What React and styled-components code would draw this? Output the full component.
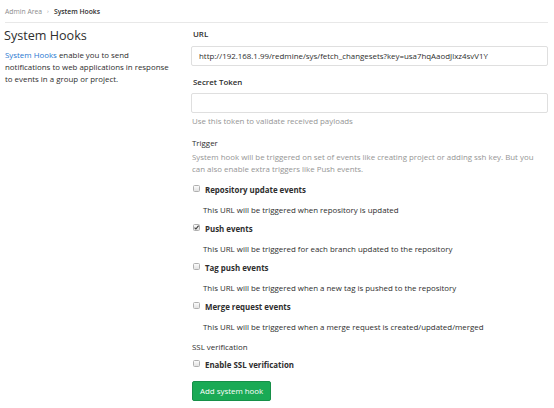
import React from 'react';
import styled, { createGlobalStyle } from 'styled-components';

const GlobalStyle = createGlobalStyle`
  html, body {
    margin: 0;
    padding: 0;
    background: #fff;
  }
  body {
    font-family: "Open Sans", "Noto Sans", sans-serif;
    color: #2e2e2e;
  }
`;

const Page = styled.div`
  width: 554px;
  height: 408px;
  padding: 0 6px 0 5px;
  box-sizing: border-box;
  overflow: hidden;
`;

const Breadcrumbs = styled.div`
  display: flex;
  align-items: center;
  gap: 5px;
  height: 22px;
  border-bottom: 1px solid #e8e8e8;
  font-size: 6.8px;
`;

const Crumb = styled.span`
  color: ${p => (p.current ? '#2e2e2e' : '#8c8c8c')};
  font-weight: ${p => (p.current ? 600 : 400)};
`;

const Sep = styled.span`
  color: #a0a0a0;
  font-size: 6px;
`;

const Content = styled.div`
  display: grid;
  grid-template-columns: 186px 1fr;
`;

const Sidebar = styled.div`
  padding-right: 6px;
`;

const Title = styled.h3`
  margin: 3px 0 3px -1px;
  font-size: 12.6px;
  font-weight: 400;
  line-height: 20px;
`;

const Lead = styled.p`
  margin: 0;
  font-size: 7.9px;
  line-height: 12px;
  white-space: nowrap;
`;

const Link = styled.a`
  color: #1f78d1;
  text-decoration: none;
`;

const Form = styled.div`
  display: flex;
  flex-direction: column;
`;

const Label = styled.label`
  display: block;
  font-size: 7.9px;
  font-weight: ${p => (p.light ? 400 : 600)};
  line-height: 12px;
  margin: ${p => p.margin || '0'};
`;

const Input = styled.div`
  height: 20px;
  box-sizing: border-box;
  border: 1px solid #dfdfdf;
  border-radius: 2px;
  display: flex;
  align-items: center;
  padding: 0 7px;
  font-size: 7.9px;
  color: #2e2e2e;
  white-space: nowrap;
`;

const Help = styled.p`
  margin: ${p => p.margin || '0'};
  font-size: 7.9px;
  line-height: 12px;
  color: #959595;
`;

const CheckRow = styled.div`
  display: flex;
  align-items: center;
  gap: 5px;
  height: 12px;
  margin: ${p => p.margin || '0'};
`;

const Box = styled.span`
  width: 5px;
  height: 5px;
  border: 1px solid #b0b0b0;
  border-radius: 1.5px;
  background: linear-gradient(#fbfbfb, #e2e2e2);
  position: relative;
  flex: none;
  margin-top: -3px;
`;

const CheckLabel = styled.span`
  font-size: 7.9px;
  font-weight: 700;
`;

const Sub = styled.p`
  margin: ${p => p.margin || '0'};
  padding-left: 12px;
  font-size: 7.9px;
  line-height: 12px;
  color: #2e2e2e;
`;

const Button = styled.button`
  align-self: flex-start;
  height: 20px;
  padding: 0 7px;
  margin: 10px 0 0 1px;
  background: #1aaa55;
  border: 1px solid #168f48;
  border-radius: 2px;
  color: #fff;
  font-family: inherit;
  font-size: 7.9px;
`;

function Check({ checked }) {
  return (
    <Box>
      {checked && (
        <svg
          width="7"
          height="7"
          viewBox="0 0 7 7"
          style={{ position: 'absolute', left: -1, top: -1 }}
        >
          <path d="M1.6 3.6 L2.9 5 L5.6 1.6" fill="none" stroke="#3a3a3a" strokeWidth="1.1" />
        </svg>
      )}
    </Box>
  );
}

const events = [
  { name: 'Repository update events', text: 'This URL will be triggered when repository is updated' },
  { name: 'Push events', text: 'This URL will be triggered for each branch updated to the repository', checked: true },
  { name: 'Tag push events', text: 'This URL will be triggered when a new tag is pushed to the repository' },
  { name: 'Merge request events', text: 'This URL will be triggered when a merge request is created/updated/merged' },
];

export default function App() {
  return (
    <Page>
      <GlobalStyle />
      <Breadcrumbs>
        <Crumb>Admin Area</Crumb>
        <Sep>›</Sep>
        <Crumb current>System Hooks</Crumb>
      </Breadcrumbs>
      <Content>
        <Sidebar>
          <Title>System Hooks</Title>
          <Lead>
            <Link>System Hooks</Link> enable you to send
            <br />
            notifications to web applications in response
            <br />
            to events in a group or project.
          </Lead>
        </Sidebar>
        <Form>
          <Label margin="5px 0 6px 2px">URL</Label>
          <Input>http://192.168.1.99/redmine/sys/fetch_changesets?key=usa7hqAaodJlxz4svV1Y</Input>
          <Label margin="10px 0 5px 2px">Secret Token</Label>
          <Input />
          <Help margin="2px 0 0 1px">Use this token to validate received payloads</Help>
          <Label light margin="10px 0 0 1px">Trigger</Label>
          <Help margin="2px 0 0 1px">
            System hook will be triggered on set of events like creating project or adding ssh key. But you
            <br />
            can also enable extra triggers like Push events.
          </Help>
          {events.map((e, i) => (
            <React.Fragment key={e.name}>
              <CheckRow margin={i === 0 ? '9px 0 0 2px' : '7.5px 0 0 2px'}>
                <Check checked={e.checked} />
                <CheckLabel>{e.name}</CheckLabel>
              </CheckRow>
              <Sub margin="7.5px 0 0 0">{e.text}</Sub>
            </React.Fragment>
          ))}
          <Label light margin="8.5px 0 0 1px">SSL verification</Label>
          <CheckRow margin="6px 0 0 2px">
            <Check />
            <CheckLabel>Enable SSL verification</CheckLabel>
          </CheckRow>
          <Button>Add system hook</Button>
        </Form>
      </Content>
    </Page>
  );
}
